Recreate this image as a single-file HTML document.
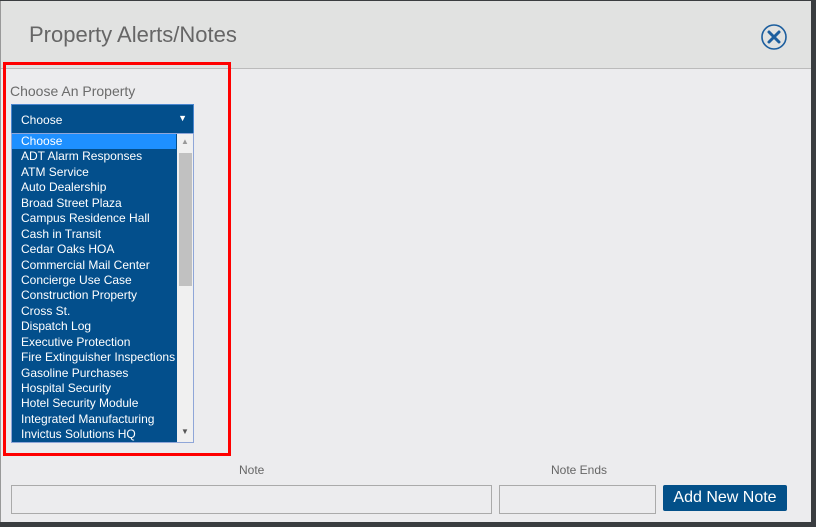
<!DOCTYPE html>
<html><head><meta charset="utf-8"><style>
*{box-sizing:border-box;margin:0;padding:0}
body{width:816px;height:527px;background:#3a3d40;position:relative;overflow:hidden;font-family:"Liberation Sans",sans-serif}
#m{position:absolute;left:0;top:1px;width:811px;height:521px;background:#ececee;border-left:1px solid #999}
#h{position:absolute;left:0;top:0;width:810px;height:68px;background:#e1e2e1;border-bottom:1px solid #bbb}
#h h1{position:absolute;left:28px;top:21px;font-weight:normal;font-size:22px;color:#666}
#x{position:absolute;left:760px;top:23px}
#red{position:absolute;left:3px;top:62px;width:228px;height:394px;border:3px solid #f00}
.lbl{position:absolute;left:10px;top:83px;font-size:14px;color:#6b6b6b}
#sel{position:absolute;left:11px;top:104px;width:183px;height:30px;background:#034f8c;border:1px solid #4a86cf;color:#fff;font-size:12px;padding:8px 0 0 9px}
#sel span{position:absolute;right:6px;top:8px;font-size:9px}
#list{position:absolute;left:11px;top:133px;width:183px;height:310px;border:1px solid #8fa6d8;background:#034f8c;overflow:hidden}
#list .it{height:15.45px;line-height:15px;font-size:12px;color:#fff;padding-left:9px;width:164px;white-space:nowrap}
#list .it.a{background:#1e90ff}
#sb{position:absolute;left:165px;top:0;width:17px;height:308px;background:#f0f0f0}
#th{position:absolute;left:2px;top:19px;width:13px;height:133px;background:#c1c1c1}
.nl{position:absolute;top:463px;font-size:12px;color:#666}
.in{position:absolute;top:485px;height:29px;border:1px solid #aaa;background:#ececee}
#btn{position:absolute;left:663px;top:485px;width:124px;height:26px;background:#035089;border-radius:2px;color:#fff;font-size:16px;text-align:center;line-height:26px}
</style></head><body>
<div id="m">
<div id="h"><h1>Property Alerts/Notes</h1>
<svg id="x" width="26" height="26" viewBox="0 0 26 26"><circle cx="13" cy="13" r="12" fill="none" stroke="#1c5e9e" stroke-width="1.6"/><path d="M8 8L18 18M18 8L8 18" stroke="#1c5e9e" stroke-width="3" stroke-linecap="round"/></svg></div>
</div>
<div id="red"></div>
<div class="lbl">Choose An Property</div>
<div id="sel">Choose<span>▼</span></div>
<div id="list">
<div class="it a">Choose</div><div class="it">ADT Alarm Responses</div><div class="it">ATM Service</div><div class="it">Auto Dealership</div><div class="it">Broad Street Plaza</div><div class="it">Campus Residence Hall</div><div class="it">Cash in Transit</div><div class="it">Cedar Oaks HOA</div><div class="it">Commercial Mail Center</div><div class="it">Concierge Use Case</div><div class="it">Construction Property</div><div class="it">Cross St.</div><div class="it">Dispatch Log</div><div class="it">Executive Protection</div><div class="it">Fire Extinguisher Inspections</div><div class="it">Gasoline Purchases</div><div class="it">Hospital Security</div><div class="it">Hotel Security Module</div><div class="it">Integrated Manufacturing</div><div class="it">Invictus Solutions HQ</div>
<div id="sb"><span style="position:absolute;left:4px;top:3px;font-size:8px;color:#999">▲</span><div id="th"></div><span style="position:absolute;left:4px;top:293px;font-size:8px;color:#555">▼</span></div>
</div>
<div class="nl" style="left:239px">Note</div>
<div class="nl" style="left:551px">Note Ends</div>
<div class="in" style="left:11px;width:481px"></div>
<div class="in" style="left:499px;width:157px"></div>
<div id="btn">Add New Note</div>
</body></html>
